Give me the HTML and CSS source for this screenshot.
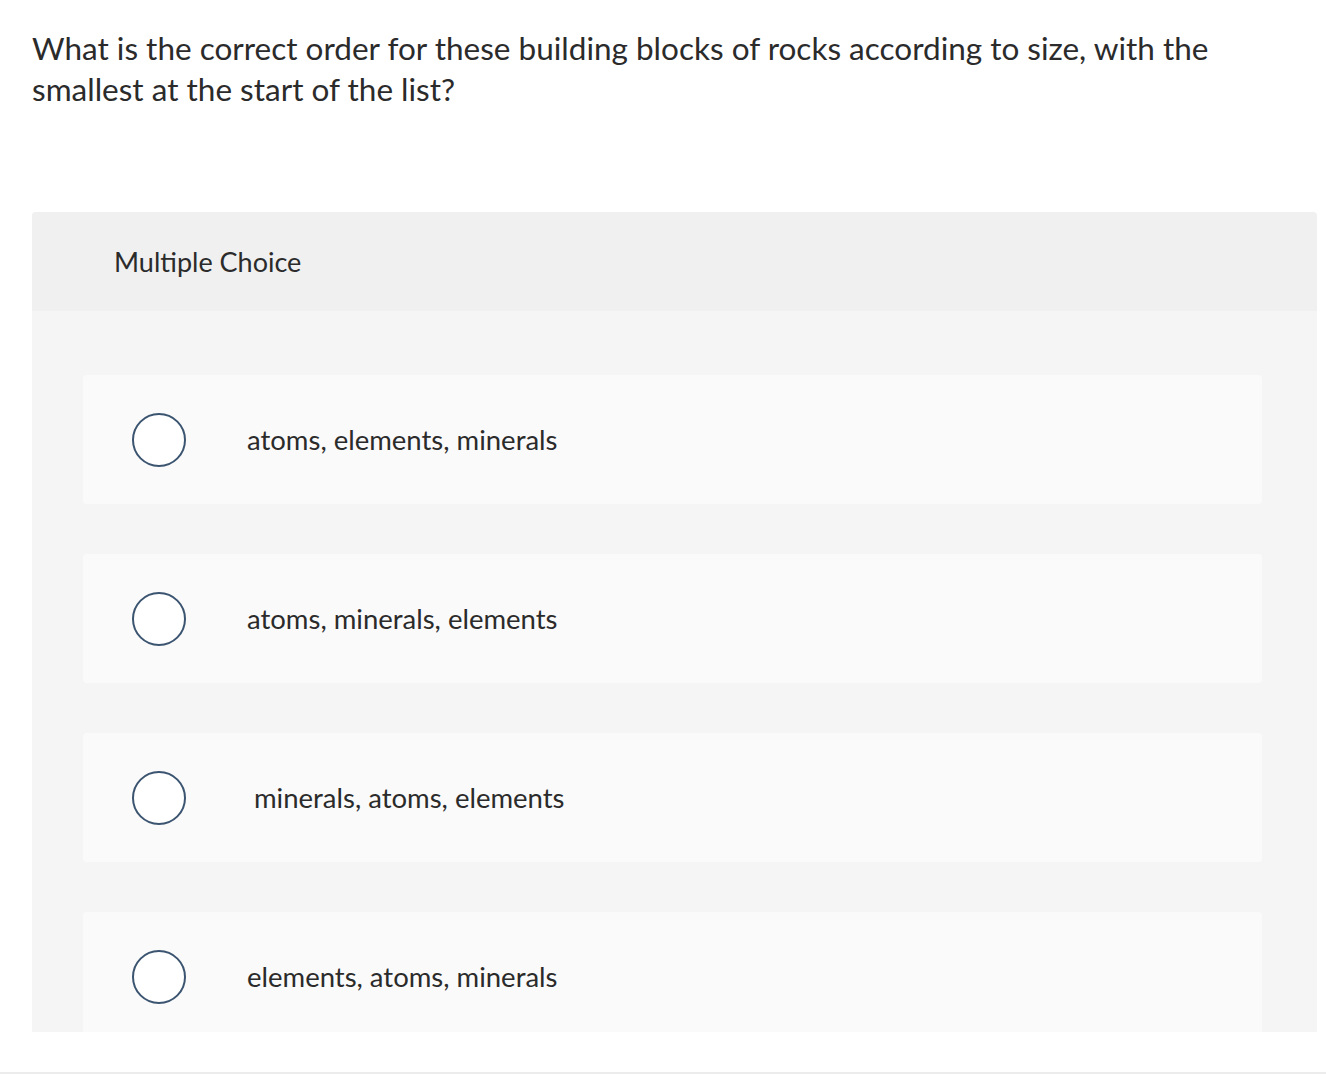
FILE: index.html
```html
<!DOCTYPE html>
<html>
<head>
<meta charset="utf-8">
<link rel="stylesheet" href="styles.css">
</head>
<body>
<div class="page">
  <p class="question">What is the correct order for these building blocks of rocks according to size, with the smallest at the start of the list?</p>
  <div class="panel">
    <div class="panel-head">Multiple Choice</div>
    <div class="panel-body">
      <div class="option"><span class="radio"></span><span class="label">atoms, elements, minerals</span></div>
      <div class="option"><span class="radio"></span><span class="label">atoms, minerals, elements</span></div>
      <div class="option"><span class="radio"></span><span class="label label-indent">minerals, atoms, elements</span></div>
      <div class="option"><span class="radio"></span><span class="label">elements, atoms, minerals</span></div>
    </div>
  </div>
  <div class="rule"></div>
</div>
</body>
</html>
```
FILE: styles.css
```css
html, body {
  margin: 0;
  padding: 0;
  background: #ffffff;
}
.page {
  width: 1326px;
  height: 1080px;
  overflow: hidden;
  font-family: Lato, "Liberation Sans", sans-serif;
  color: #2b2b2b;
}
.question {
  margin: 0;
  padding: 28px 80px 0 32px;
  font-size: 31.5px;
  line-height: 41px;
  height: 212px;
  box-sizing: border-box;
}
.panel {
  margin-left: 32px;
  width: 1285px;
  height: 820px;
  overflow: hidden;
  border-radius: 4px 4px 0 0;
  background: #f5f5f5;
}
.panel-head {
  height: 99px;
  background: #f0f0f0;
  display: flex;
  align-items: center;
  padding-left: 82px;
  font-size: 27px;
}
.panel-body {
  padding: 64px 55px 0 51px;
  display: flex;
  flex-direction: column;
  gap: 50px;
}
.option {
  height: 129px;
  flex-shrink: 0;
  background: #fafafa;
  border-radius: 4px;
  display: flex;
  align-items: center;
  padding-left: 49px;
}
.radio {
  width: 50px;
  height: 50px;
  border: 2px solid #3b5470;
  border-radius: 50%;
  background: #ffffff;
  flex-shrink: 0;
}
.label {
  margin-left: 61px;
  font-size: 27.5px;
}
.label-indent {
  margin-left: 68px;
}
.rule {
  margin-top: 40px;
  height: 2px;
  background: #ececec;
}
```
